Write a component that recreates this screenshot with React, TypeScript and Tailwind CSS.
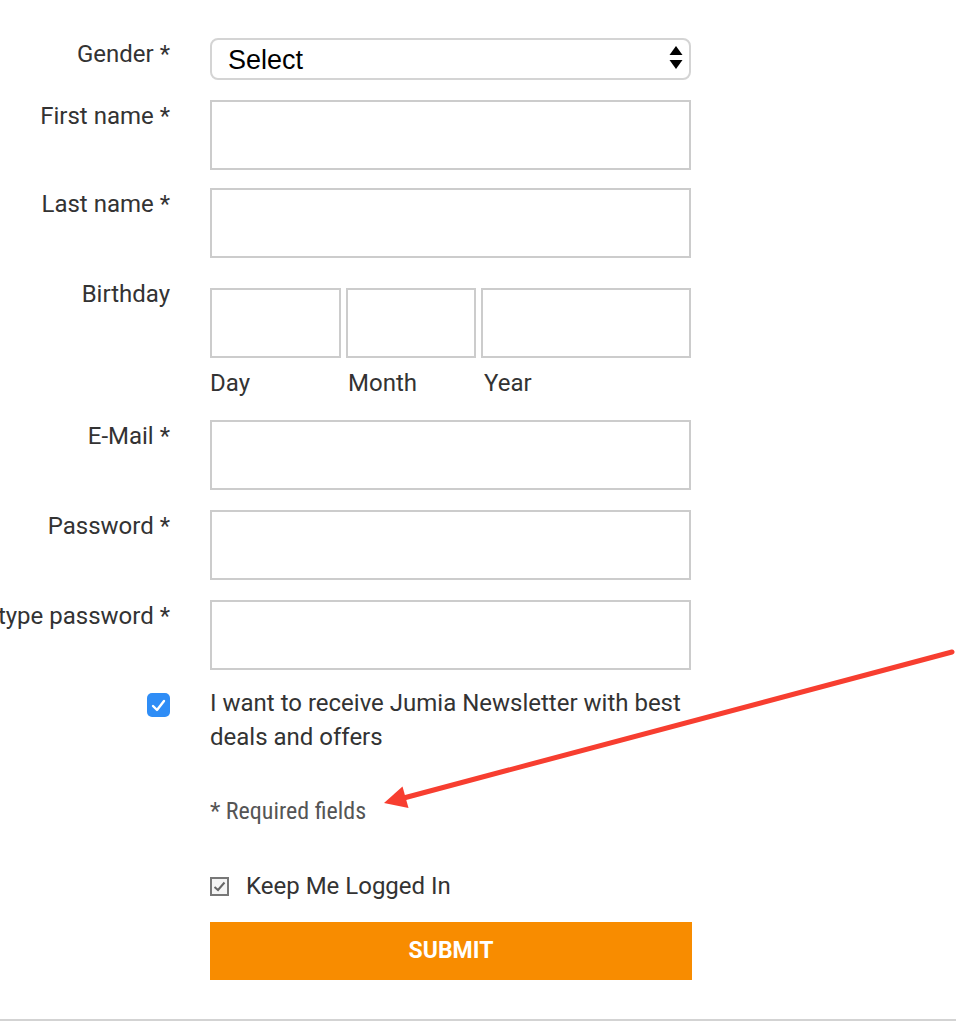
import React, { useState } from "react";

const labelCls =
  "w-[170px] shrink-0 flex justify-end whitespace-nowrap text-[24px] leading-[32px] text-[#333]";
const inputCls =
  "w-[481px] h-[70px] border-2 border-[#cccccc] bg-white outline-none px-3 text-[20px]";

const FieldRow: React.FC<{ label: string; className?: string; type?: string }> = ({
  label,
  className,
  type = "text",
}) => (
  <div className={`flex gap-[40px] ${className ?? ""}`}>
    <label className={labelCls}>{label}</label>
    <input className={inputCls} type={type} />
  </div>
);

export default function App() {
  const [newsletter, setNewsletter] = useState(true);
  const [keepLogged, setKeepLogged] = useState(true);

  return (
    <div className="relative w-[956px] h-[1026px] overflow-hidden bg-white font-['Roboto',sans-serif] pt-[38px]">
      {/* Gender */}
      <div className="flex gap-[40px]">
        <label className={labelCls}>Gender *</label>
        <div className="relative w-[481px] h-[42px]">
          <select className="w-full h-full appearance-none rounded-[8px] border-2 border-[#d4d4d4] bg-white pl-[16px] text-[27px] text-black font-['Liberation_Sans',sans-serif] outline-none">
            <option>Select</option>
            <option>Male</option>
            <option>Female</option>
          </select>
          <svg
            className="absolute right-[8px] top-[8px] pointer-events-none"
            width="14"
            height="24"
            viewBox="0 0 14 24"
          >
            <polygon points="7,0 13.5,9 0.5,9" fill="#000" />
            <polygon points="0.5,14 13.5,14 7,23" fill="#000" />
          </svg>
        </div>
      </div>

      <FieldRow label="First name *" className="mt-[20px]" />
      <FieldRow label="Last name *" className="mt-[18px]" />

      {/* Birthday */}
      <div className="flex gap-[40px] mt-[30px]">
        <label className={`${labelCls} -mt-[10px]`}>Birthday</label>
        <div className="w-[481px]">
          <div className="flex">
            <input className="w-[131px] h-[70px] border-2 border-[#cccccc] outline-none" />
            <input className="w-[130px] h-[70px] border-2 border-[#cccccc] outline-none ml-[5px]" />
            <input className="w-[210px] h-[70px] border-2 border-[#cccccc] outline-none ml-[5px]" />
          </div>
          <div className="flex mt-[11px] text-[24px] leading-[28px] text-[#333]">
            <span className="w-[138px]">Day</span>
            <span className="w-[136px]">Month</span>
            <span>Year</span>
          </div>
        </div>
      </div>

      <FieldRow label="E-Mail *" className="mt-[23px]" type="email" />
      <FieldRow label="Password *" className="mt-[20px]" type="password" />
      <FieldRow label="Retype password *" className="mt-[20px]" type="password" />

      {/* Newsletter */}
      <div className="flex gap-[40px] mt-[16px]">
        <div className="w-[170px] shrink-0 flex justify-end pt-[7px]">
          <button
            type="button"
            onClick={() => setNewsletter(!newsletter)}
            className={`w-[23px] h-[24px] rounded-[5px] flex items-center justify-center ${
              newsletter ? "bg-[#2f8df6]" : "bg-white border border-[#999]"
            }`}
          >
            {newsletter && (
              <svg width="15" height="13" viewBox="0 0 15 13">
                <path
                  d="M2 7 L6 11 L13 2"
                  fill="none"
                  stroke="#fff"
                  strokeWidth="2.4"
                  strokeLinecap="round"
                  strokeLinejoin="round"
                />
              </svg>
            )}
          </button>
        </div>
        <p className="w-[481px] text-[24px] leading-[34px] text-[#333]">
          I want to receive Jumia Newsletter with best deals and offers
        </p>
      </div>

      {/* Required */}
      <div className="pl-[210px] mt-[43px] text-[24px] leading-[28px] text-[#555] font-['Roboto_Condensed','Liberation_Sans_Narrow','Roboto',sans-serif] [font-stretch:condensed]">
        * Required fields
      </div>

      {/* Keep me logged */}
      <div className="pl-[210px] mt-[47px] flex items-center h-[28px]">
        <button
          type="button"
          onClick={() => setKeepLogged(!keepLogged)}
          className="w-[19px] h-[19px] border-2 border-[#777] bg-[#f4f4f4] flex items-center justify-center"
        >
          {keepLogged && (
            <svg width="13" height="11" viewBox="0 0 13 11">
              <path
                d="M1.5 6 L5 9 L11.5 1.5"
                fill="none"
                stroke="#666"
                strokeWidth="2"
              />
            </svg>
          )}
        </button>
        <span className="ml-[17px] text-[24px] leading-[28px] text-[#333]">
          Keep Me Logged In
        </span>
      </div>

      {/* Submit */}
      <div className="pl-[210px] mt-[22px]">
        <button
          type="button"
          className="w-[482px] h-[58px] bg-[#f88c00] text-white text-[23px] font-bold"
        >
          SUBMIT
        </button>
      </div>

      <div className="mt-[39px] h-[2px] w-full bg-[#d3d3d3]" />

      {/* annotation arrow */}
      <svg
        className="absolute left-0 top-0 pointer-events-none"
        width="956"
        height="1026"
        viewBox="0 0 956 1026"
      >
        <line
          x1="952"
          y1="652"
          x2="400"
          y2="799"
          stroke="#f73e30"
          strokeWidth="5"
          strokeLinecap="round"
        />
        <polygon points="384,803 402.5,786.5 408.5,808" fill="#f73e30" />
      </svg>
    </div>
  );
}
